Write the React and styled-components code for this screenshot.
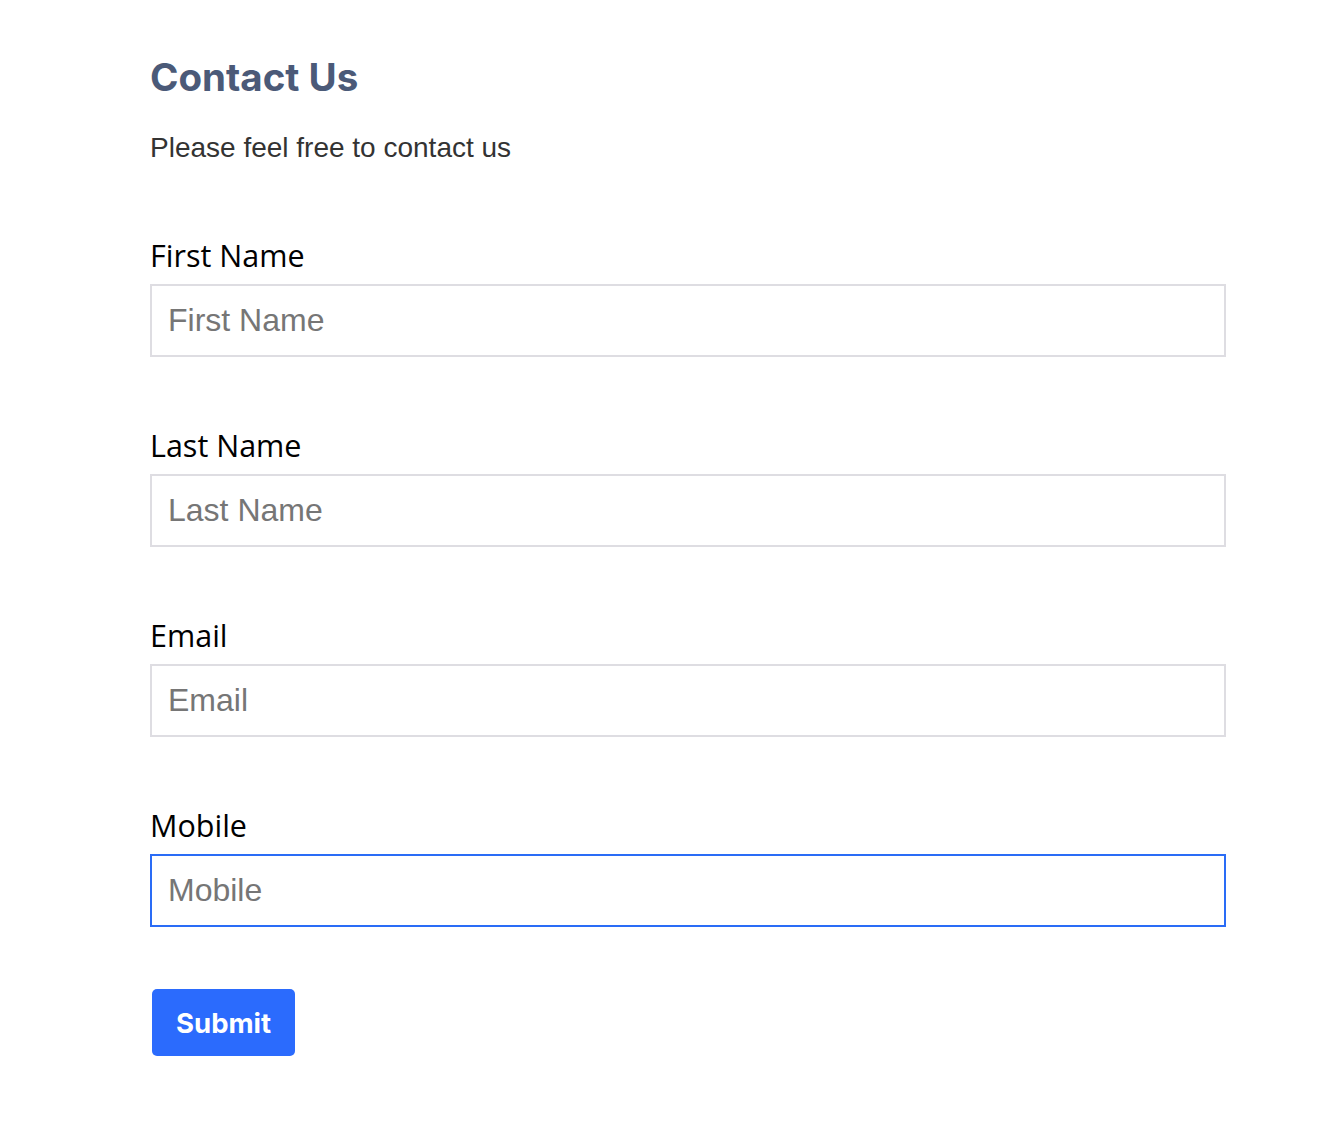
import React from 'react';
import styled, { createGlobalStyle } from 'styled-components';

const GlobalStyle = createGlobalStyle`
  body {
    margin: 0;
    background: #ffffff;
    font-family: "Liberation Sans", Arial, sans-serif;
  }
`;

const Page = styled.div`
  padding: 52px 92px 60px 150px;
`;

const Title = styled.h1`
  margin: 0;
  font-family: Inter, "Liberation Sans", sans-serif;
  font-size: 38.5px;
  font-weight: 700;
  color: #4b5a78;
  line-height: 50px;
`;

const Subtitle = styled.p`
  margin: 28px 0 0;
  font-size: 28px;
  color: #333333;
  line-height: 36px;
`;

const Form = styled.form`
  display: flex;
  flex-direction: column;
  margin-top: 69px;
`;

const Field = styled.div`
  display: flex;
  flex-direction: column;
  margin-bottom: 68px;
`;

const Label = styled.label`
  font-family: "Open Sans", sans-serif;
  font-size: 30.5px;
  color: #000000;
  line-height: 40px;
  margin-bottom: 9px;
`;

const Input = styled.input`
  box-sizing: border-box;
  width: 100%;
  height: 73px;
  padding: 0 16px;
  border: 2px solid ${({ $focused }) => ($focused ? '#2a6cf6' : '#dedde2')};
  border-radius: 0;
  outline: none;
  font-family: "Liberation Sans", Arial, sans-serif;
  font-size: 32px;
  color: #222;
  &::placeholder {
    color: #767676;
  }
`;

const Submit = styled.button`
  align-self: flex-start;
  margin: -6px 0 0 2px;
  padding: 0 24px;
  height: 67px;
  border: none;
  border-radius: 5px;
  background: #2b6bfd;
  color: #ffffff;
  font-family: Inter, "Liberation Sans", sans-serif;
  font-size: 27.5px;
  font-weight: 700;
  cursor: pointer;
`;

const fields = ['First Name', 'Last Name', 'Email', 'Mobile'];

export default function App() {
  return (
    <>
      <GlobalStyle />
      <Page>
        <Title>Contact Us</Title>
        <Subtitle>Please feel free to contact us</Subtitle>
        <Form onSubmit={(e) => e.preventDefault()}>
          {fields.map((name) => (
            <Field key={name}>
              <Label>{name}</Label>
              <Input placeholder={name} $focused={name === 'Mobile'} />
            </Field>
          ))}
          <Submit type="submit">Submit</Submit>
        </Form>
      </Page>
    </>
  );
}
